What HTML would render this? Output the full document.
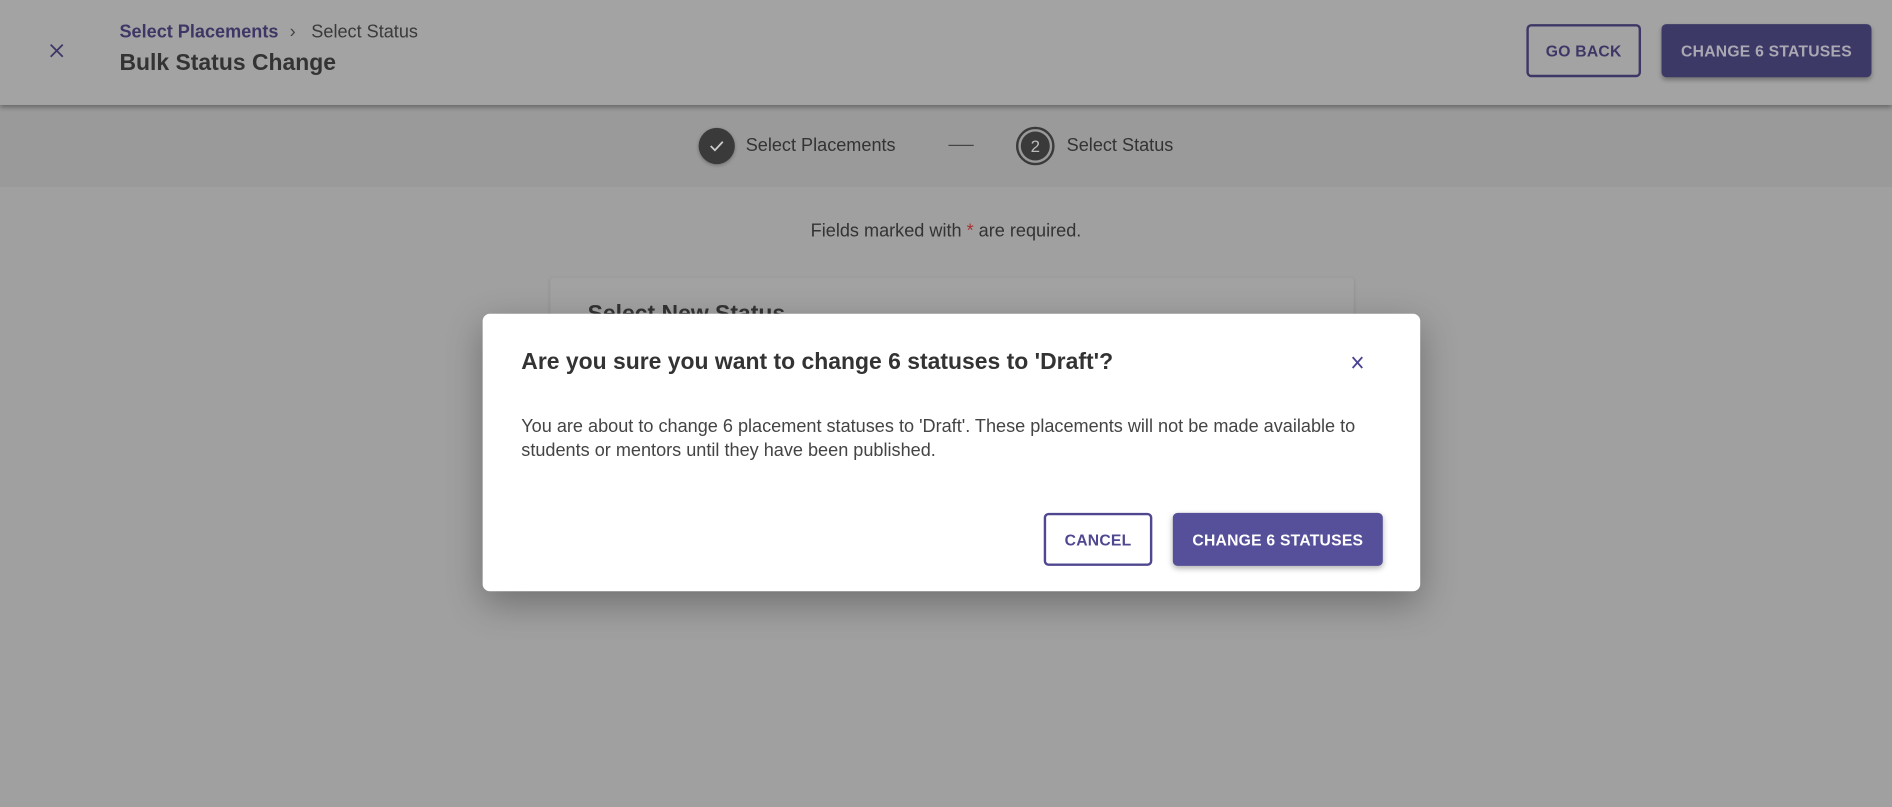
<!DOCTYPE html>
<html><head><meta charset="utf-8"><style>
html,body{margin:0;padding:0;width:1892px;height:807px;overflow:hidden;background:#a0a0a0;}
#w{position:absolute;left:0;top:0;width:1568px;height:669px;transform:scale(1.20663);transform-origin:0 0;font-family:"Liberation Sans",sans-serif;background:#a0a0a0;}
.a{position:absolute;white-space:nowrap;}
.hdr{position:absolute;left:0;top:0;width:1568px;height:87px;background:#a3a3a3;box-shadow:0 2px 4px rgba(0,0,0,.35);z-index:2}
.step{position:absolute;left:0;top:87px;width:1568px;height:68px;background:#9a9a9a}
.btn{position:absolute;box-sizing:border-box;border-radius:4px;font-weight:bold;font-size:13px;display:flex;align-items:center;justify-content:center;letter-spacing:.2px}
</style></head><body><div id="w">
<div class="hdr">
 <svg class="a" style="left:41px;top:36px" width="12" height="12" viewBox="0 0 12 12"><path d="M1 1L11 11M11 1L1 11" stroke="#3d3766" stroke-width="1.5"/></svg>
 <div class="a" style="left:99px;top:18px;font-size:15px;font-weight:bold;color:#3d3766">Select Placements</div>
 <div class="a" style="left:240px;top:18px;font-size:15px;color:#444">›</div>
 <div class="a" style="left:258px;top:18px;font-size:15px;color:#3a3a3a">Select Status</div>
 <div class="a" style="left:99px;top:42px;font-size:19px;font-weight:bold;color:#333">Bulk Status Change</div>
 <div class="btn" style="left:1265px;top:20px;width:95px;height:44px;border:2px solid #3d3766;color:#3d3766">GO BACK</div>
 <div class="btn" style="left:1377px;top:20px;width:174px;height:44px;background:#3d3966;color:#a9a8b3;box-shadow:0 2px 4px rgba(0,0,0,.3)">CHANGE 6 STATUSES</div>
</div>
<div class="step">
 <div class="a" style="left:579px;top:19px;width:30px;height:30px;border-radius:50%;background:#3a3a3a;box-shadow:0 1px 3px rgba(0,0,0,.3)"></div>
 <svg class="a" style="left:588px;top:29px" width="12" height="10" viewBox="0 0 12 10"><path d="M1 5L4.5 8.5L11 1.5" stroke="#ccc" stroke-width="1.5" fill="none"/></svg>
 <div class="a" style="left:618px;top:25px;font-size:15px;color:#333">Select Placements</div>
 <div class="a" style="left:786px;top:33px;width:21px;height:1px;background:#444"></div>
 <div class="a" style="left:842px;top:18px;width:32px;height:32px;box-sizing:border-box;border-radius:50%;border:2px solid #3a3a3a"></div>
 <div class="a" style="left:846px;top:22px;width:24px;height:24px;border-radius:50%;background:#3a3a3a;color:#bbb;font-size:14px;text-align:center;line-height:24px">2</div>
 <div class="a" style="left:884px;top:25px;font-size:15px;color:#333">Select Status</div>
</div>
<div class="a" style="left:0;width:1568px;top:183px;text-align:center;font-size:15px;color:#333">Fields marked with <span style="color:#a33">*</span> are required.</div>
<div class="a" style="left:456px;top:230px;width:666px;height:200px;background:#a2a2a2;box-shadow:0 1px 3px rgba(0,0,0,.12);border-radius:3px"></div>
<div class="a" style="left:487px;top:250px;font-size:19px;font-weight:bold;color:#333">Select New Status</div>
<div class="a" style="left:400px;top:260px;width:777px;height:230px;background:#fff;border-radius:6px;box-shadow:0 10px 30px rgba(0,0,0,.3)">
 <div class="a" style="left:32px;top:30px;font-size:19px;font-weight:bold;color:#333">Are you sure you want to change 6 statuses to 'Draft'?</div>
 <svg class="a" style="left:720px;top:35px" width="10" height="11" viewBox="0 0 10 11"><path d="M1 1L9 10M9 1L1 10" stroke="#4a4490" stroke-width="1.5"/></svg>
 <div class="a" style="left:32px;top:84px;font-size:15px;line-height:20px;color:#444;white-space:normal;width:720px">You are about to change 6 placement statuses to 'Draft'. These placements will not be made available to students or mentors until they have been published.</div>
 <div class="btn" style="left:465px;top:165px;width:90px;height:44px;border:2px solid #4f4891;color:#4f4891">CANCEL</div>
 <div class="btn" style="left:572px;top:165px;width:174px;height:44px;background:#56509a;color:#fff;box-shadow:0 2px 5px rgba(0,0,0,.3)">CHANGE 6 STATUSES</div>
</div>
</div></body></html>
